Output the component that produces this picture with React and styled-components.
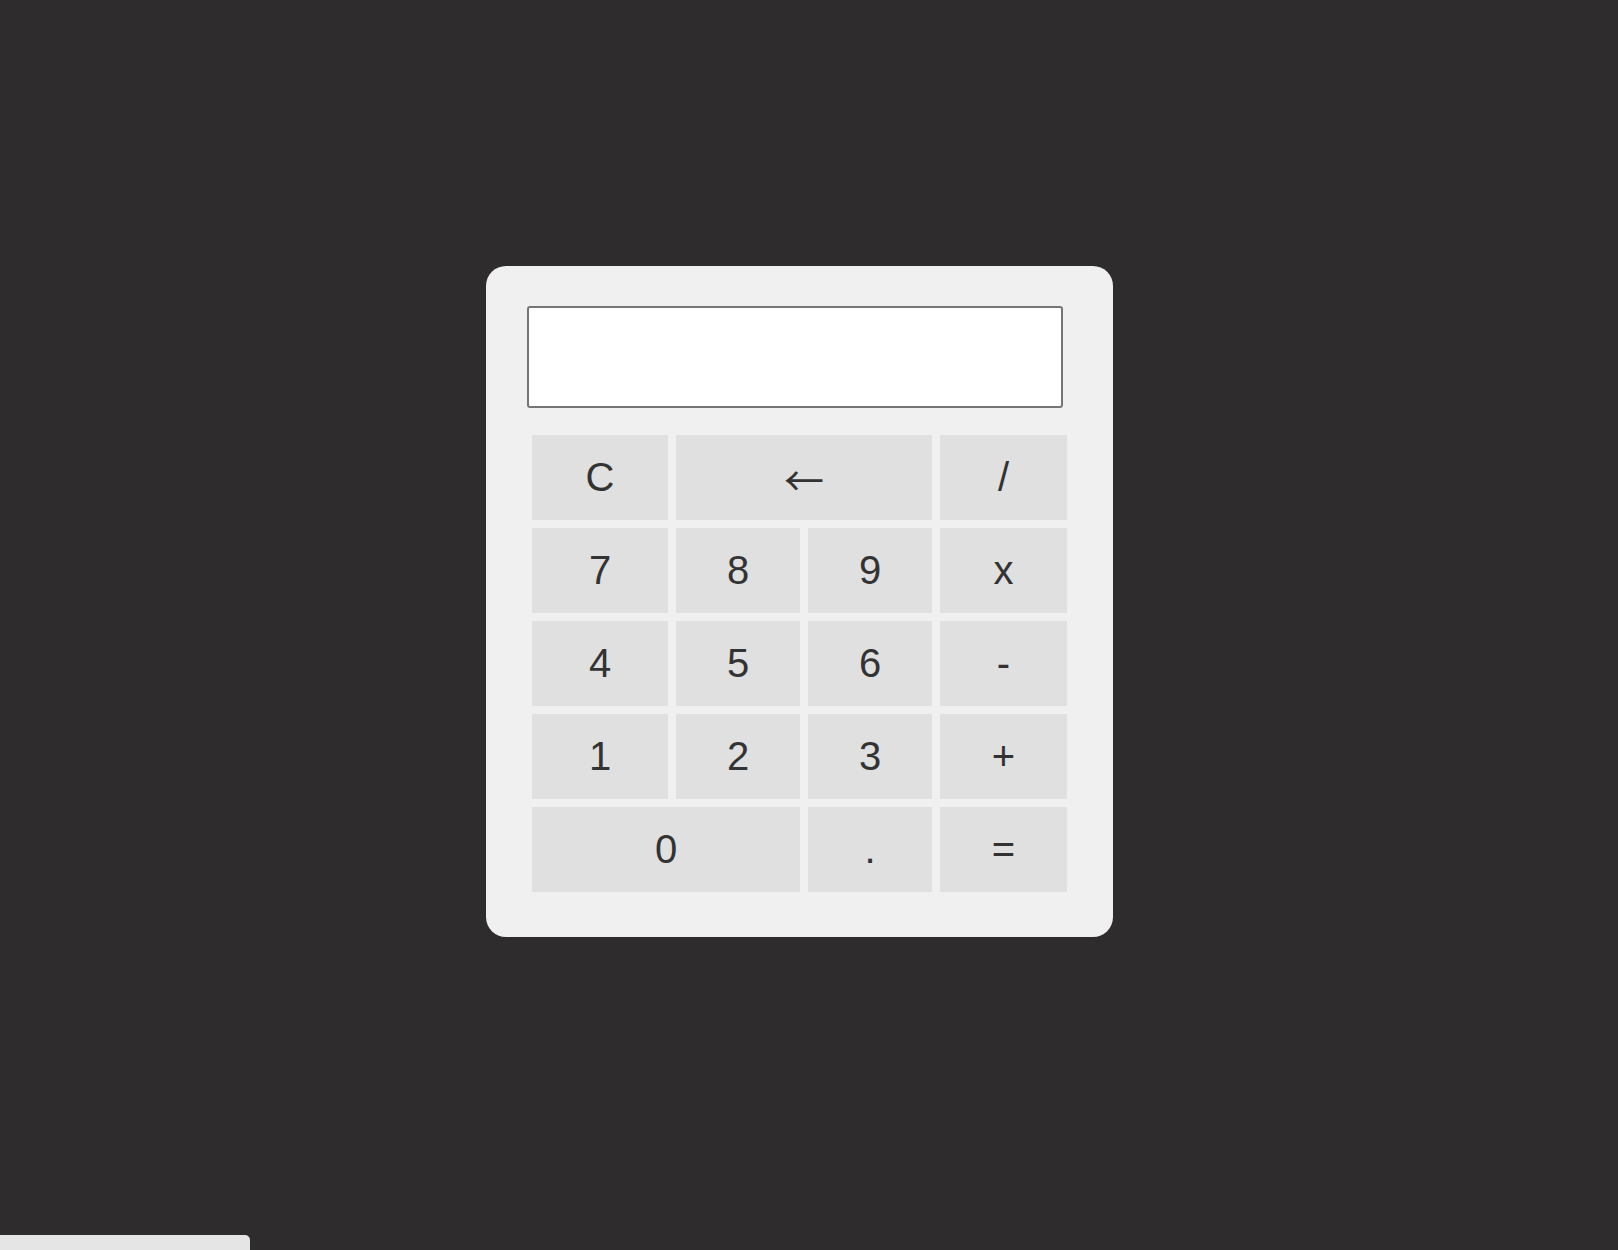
import React, {useState} from 'react';
import styled, {createGlobalStyle} from 'styled-components';

const GlobalStyle = createGlobalStyle`
  html, body {
    margin: 0;
    padding: 0;
    background-color: #2e2c2d;
    font-family: "Liberation Sans", Arial, sans-serif;
  }
`;

// keypad rows, top to bottom
const keys = [
  {label: 'C', value: 'clear'},
  {label: '←', value: 'back', span: 2, symbol: true},
  {label: '/', value: '/'},
  {label: '7', value: '7'},
  {label: '8', value: '8'},
  {label: '9', value: '9'},
  {label: 'x', value: '*'},
  {label: '4', value: '4'},
  {label: '5', value: '5'},
  {label: '6', value: '6'},
  {label: '-', value: '-'},
  {label: '1', value: '1'},
  {label: '2', value: '2'},
  {label: '3', value: '3'},
  {label: '+', value: '+'},
  {label: '0', value: '0', span: 2},
  {label: '.', value: '.'},
  {label: '=', value: '='},
];

const App = () => {
  const [input, setInput] = useState('');

  const press = (value) => {
    if (value === 'clear') return setInput('');
    if (value === 'back') return setInput(input.slice(0, -1));
    if (value === '=') {
      try {
        // eslint-disable-next-line no-new-func
        setInput(String(Function('return (' + input + ')')()));
      } catch (e) {
        setInput('Error');
      }
      return;
    }
    setInput(input + value);
  };

  return (
    <Page>
      <GlobalStyle/>
      <Calculator>
        <Display type="text" value={input} readOnly/>
        <Keypad>
          {keys.map((k) => (
            <Key key={k.value} span={k.span} onClick={() => press(k.value)}>
              {k.symbol ? <Arrow>{k.label}</Arrow> : k.label}
            </Key>
          ))}
        </Keypad>
      </Calculator>
      <BottomTab/>
    </Page>
  );
};

const Page = styled.div`
  min-height: 1250px;
  box-sizing: border-box;
  display: flex;
  align-items: flex-start;
  padding: 266px 0 0 486px;
`;

const Calculator = styled.div`
  width: 627px;
  box-sizing: border-box;
  padding: 40px 46px 45px;
  background-color: #f0f0f0;
  border-radius: 20px;
  display: flex;
  flex-direction: column;
`;

const Display = styled.input`
  width: 536px;
  height: 102px;
  box-sizing: border-box;
  margin: 0 0 27px -5px;
  padding: 0 10px;
  border: 2px solid #767676;
  border-radius: 3px;
  background-color: #fff;
  font-family: "Liberation Sans", Arial, sans-serif;
  font-size: 40px;
  color: #333;
  text-align: right;
  outline: none;
`;

const Keypad = styled.div`
  display: grid;
  grid-template-columns: 136px 124px 124px 127px;
  grid-auto-rows: 85px;
  gap: 8px;
`;

const Key = styled.button`
  grid-column: span ${(p) => p.span || 1};
  display: flex;
  align-items: center;
  justify-content: center;
  margin: 0;
  padding: 0;
  border: none;
  border-radius: 0;
  background-color: #e0e0e0;
  color: #333;
  font-family: "Liberation Sans", Arial, sans-serif;
  font-size: 40px;
  cursor: pointer;
  outline: none;

  &:hover {
    background-color: #d6d6d6;
  }
`;

const Arrow = styled.span`
  font-family: "Noto Sans CJK JP", sans-serif;
  font-size: 40px;
  line-height: 1;
  margin-top: 3px;
`;

const BottomTab = styled.div`
  position: fixed;
  left: 0;
  bottom: 0;
  width: 250px;
  height: 15px;
  background-color: #e5e5e5;
  border-top-right-radius: 5px;
`;

export default App;
